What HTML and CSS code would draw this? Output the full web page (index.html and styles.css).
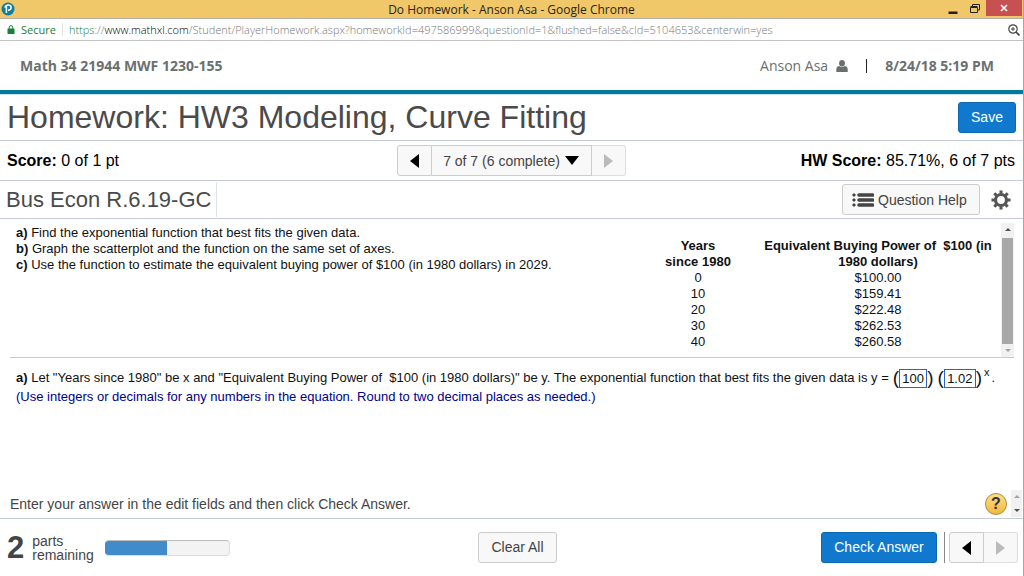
FILE: index.html
```html
<!DOCTYPE html>
<html lang="en">
<head>
  <meta charset="UTF-8">
  <title>Do Homework - Anson Asa - Google Chrome</title>
  <link rel="stylesheet" href="styles.css">
</head>
<body>
  <div class="titlebar">
    <svg class="favicon" width="14" height="14" viewBox="0 0 14 14">
      <circle cx="7" cy="7" r="6.5" fill="#0c7f9e"/>
      <path d="M5.4 11V4.2M4 5.6C4.4 3.6 6 3 7.3 3c1.700 0 2.800 1 2.800 2.500S8.900 8.200 7 8.200" fill="none" stroke="#fff" stroke-width="1.500"/>
    </svg>
    <span class="window-title">Do Homework - Anson Asa - Google Chrome</span>
    <div class="window-buttons">
      <button class="win-btn" aria-label="Minimize">
        <svg width="10" height="12" viewBox="0 0 10 12"><path d="M0.500 9.500h9v2.500h-9z" fill="#222"/></svg>
      </button>
      <button class="win-btn" aria-label="Restore">
        <svg width="10" height="9" viewBox="0 0 10 9"><path d="M2.500 2V.5h7v5.500H8M.5 3.500h7v5h-7zM.5 2.500h7" fill="none" stroke="#222"/></svg>
      </button>
      <button class="win-btn win-close" aria-label="Close">
        <svg width="8" height="8" viewBox="0 0 8 8"><path d="M1 1l6 6M7 1L1 7" stroke="#fff" stroke-width="1.600"/></svg>
      </button>
    </div>
  </div>

  <div class="urlbar">
    <svg width="8" height="9" viewBox="0 0 8 9">
      <rect x="0.500" y="3.500" width="7" height="5.500" rx="0.500" fill="#188038"/>
      <path d="M2.200 4V2.400a1.800 1.800 0 0 1 3.600 0V4" fill="none" stroke="#188038"/>
    </svg>
    <span class="secure">Secure</span>
    <span class="url"><span class="scheme">https</span>://<span class="host">www.mathxl.com</span>/Student/PlayerHomework.aspx?homeworkId=497586999&amp;questionId=1&amp;flushed=false&amp;cId=5104653&amp;centerwin=yes</span>
    <svg class="zoom-icon" width="12" height="12" viewBox="0 0 12 12">
      <circle cx="5" cy="5" r="4.200" fill="none" stroke="#444" stroke-width="1.200"/>
      <path d="M3 5h4M5 3v4" stroke="#444"/>
      <path d="M8 8l3.500 3.500" stroke="#444" stroke-width="1.700"/>
    </svg>
  </div>

  <header class="course">
    <span class="course-name">Math 34 21944 MWF 1230-155</span>
    <div class="user">
      <span>Anson Asa</span>
      <svg width="12" height="12" viewBox="0 0 12 12">
        <ellipse cx="6" cy="3.300" rx="2.900" ry="3.300" fill="#6a7070"/>
        <path d="M.3 12V9.300C.3 7.300 1.600 6.300 3.200 6c.8.7 1.700 1 2.800 1s2-.3 2.800-1c1.600.3 2.900 1.300 2.900 3.300V12z" fill="#6a7070"/>
      </svg>
      <span class="bar"></span>
      <span class="clock">8/24/18 5:19 PM</span>
    </div>
  </header>

  <div class="row title-row">
    <h1>Homework: HW3 Modeling, Curve Fitting</h1>
    <button class="btn-primary save">Save</button>
  </div>

  <div class="row score-row">
    <span><b>Score:</b> 0 of 1 pt</span>
    <div class="pager">
      <button class="pager-prev" aria-label="Previous question"><span class="arrow left"></span></button>
      <button class="pager-list">7 of 7 (6 complete) <span class="arrow down"></span></button>
      <button class="pager-next" aria-label="Next question" disabled><span class="arrow right"></span></button>
    </div>
    <span class="hw-score"><b>HW Score:</b> 85.71%, 6 of 7 pts</span>
  </div>

  <div class="row question-row">
    <h2>Bus Econ R.6.19-GC</h2>
    <div class="tools">
      <button class="btn-plain help-btn">
        <svg width="22" height="14" viewBox="0 0 22 14">
          <path d="M7 2h13.500M7 7h13.500M7 12h13.500" stroke="#444" stroke-width="3.600" stroke-linecap="round"/>
          <path d="M2 0l2 2-2 2L0 2zM2 5l2 2-2 2-2-2zM2 10l2 2-2 2-2-2z" fill="#444"/>
        </svg>
        Question Help
      </button>
      <button class="gear" aria-label="Settings">
        <svg width="20" height="20" viewBox="0 0 20 20">
          <circle cx="10" cy="10" r="5.500" fill="none" stroke="#555" stroke-width="3.200"/>
          <g stroke="#555" stroke-width="3">
            <path d="M10 .5v3M10 16.500v3M.5 10h3M16.500 10h3"/>
            <path d="M3.300 3.300l2.100 2.100M14.600 14.600l2.100 2.100M3.300 16.700l2.100-2.100M14.600 5.400l2.100-2.100"/>
          </g>
        </svg>
      </button>
    </div>
  </div>

  <section class="problem">
    <div class="prompt">
      <p><b>a)</b> Find the exponential function that best fits the given data.</p>
      <p><b>b)</b> Graph the scatterplot and the function on the same set of axes.</p>
      <p><b>c)</b> Use the function to estimate the equivalent buying power of $100 (in 1980 dollars) in 2029.</p>
    </div>
    <table class="data">
      <thead>
        <tr><th>Years<br>since 1980</th><th>Equivalent Buying Power of&nbsp; $100 (in<br>1980 dollars)</th></tr>
      </thead>
      <tbody>
        <tr><td>0</td><td>$100.00</td></tr>
        <tr><td>10</td><td>$159.41</td></tr>
        <tr><td>20</td><td>$222.48</td></tr>
        <tr><td>30</td><td>$262.53</td></tr>
        <tr><td>40</td><td>$260.58</td></tr>
      </tbody>
    </table>
    <div class="scrollbar">
      <span class="tick up"></span>
      <span class="thumb"></span>
      <span class="tick dn light"></span>
    </div>
  </section>

  <main class="work">
    <div class="equation">
      <span><b>a)</b> Let "Years since 1980" be x and "Equivalent Buying Power of&nbsp; $100 (in 1980 dollars)" be y. The exponential function that best fits the given data is y&nbsp;=</span>
      <span class="factor"><span class="paren">(</span><input class="answer" type="text" value="100" aria-label="Coefficient"><span class="paren">)</span></span>
      <span class="factor"><span class="paren">(</span><input class="answer wide" type="text" value="1.02" aria-label="Base"><span class="paren">)</span><sup>x</sup>.</span>
    </div>
    <p class="hint">(Use integers or decimals for any numbers in the equation. Round to two decimal places as needed.)</p>
  </main>

  <div class="status">
    <span>Enter your answer in the edit fields and then click Check Answer.</span>
    <button class="help-circle" aria-label="Help">?</button>
    <div class="mini-scroll">
      <span class="tick up light"></span>
      <span class="tick dn"></span>
    </div>
  </div>

  <footer class="bottom">
    <div class="parts">
      <span class="parts-count">2</span>
      <span class="parts-label">parts<br>remaining</span>
      <div class="progress"><div class="progress-fill" style="width: 50%"></div></div>
    </div>
    <button class="btn-plain clear">Clear All</button>
    <div class="actions">
      <button class="btn-primary check">Check Answer</button>
      <div class="pager pager-small">
        <button aria-label="Previous part"><span class="arrow left"></span></button>
        <button class="pager-next" aria-label="Next part" disabled><span class="arrow right"></span></button>
      </div>
    </div>
  </footer>
</body>
</html>
```
FILE: styles.css
```css
* {
  box-sizing: border-box;
}

body {
  margin: 0;
  min-height: 100vh;
  display: flex;
  flex-direction: column;
  background: #fff;
  border-right: 1px solid #b9a680;
  font-family: "Liberation Sans", Arial, sans-serif;
  font-size: 13px;
  line-height: 16px;
  color: #111;
}

button {
  font-family: inherit;
  padding: 0;
  border: none;
  background: none;
  cursor: pointer;
}

h1, h2, p {
  margin: 0;
  font-weight: normal;
}

svg {
  display: block;
}

/* browser window */
.titlebar {
  display: grid;
  grid-template-columns: 1fr auto 1fr;
  height: 19px;
  background: #f0c869;
  border-bottom: 1px solid #b3b0a8;
}

.favicon {
  margin: 2px 0 0 1px;
}

.window-title {
  font: 12px/19px "Open Sans", sans-serif;
  color: #2a2515;
}

.window-buttons {
  display: flex;
  justify-content: flex-end;
}

.win-btn {
  width: 22px;
  height: 16px;
  display: flex;
  justify-content: center;
  align-items: center;
}

.win-close {
  width: 36px;
  margin-right: 1px;
  background: #c75050;
}

.urlbar {
  display: flex;
  align-items: center;
  height: 22px;
  padding: 0 3px 0 7px;
  border-bottom: 1px solid #c4c4c4;
  font: 11px/20px "Open Sans", sans-serif;
  color: #777;
}

.secure {
  margin-left: 6px;
  padding-right: 6px;
  border-right: 1px solid #e4e4e4;
  line-height: 13px;
  color: #188038;
}

.url {
  margin-left: 6px;
  font-weight: 300;
}

.scheme {
  color: #188038;
}

.host {
  color: #000;
}

.zoom-icon {
  margin-left: auto;
}

/* course header */
.course {
  display: flex;
  justify-content: space-between;
  align-items: center;
  height: 53px;
  padding: 0 29px 0 20px;
  border-bottom: 4px solid #007a9c;
  font-family: "Open Sans", sans-serif;
  font-size: 14px;
  color: #6a7070;
}

.course-name,
.clock {
  font-weight: bold;
}

.user {
  display: flex;
  align-items: center;
}

.user svg {
  margin-left: 8px;
}

.bar {
  width: 1px;
  height: 14px;
  margin: 0 18px;
  background: #222;
}

/* heading rows */
.row {
  display: flex;
  justify-content: space-between;
  align-items: center;
  border-bottom: 1px solid #c5cbda;
}

.title-row {
  height: 47px;
  padding: 0 7px;
  border-top: 1px solid #cfe6ee;
}

h1 {
  padding-bottom: 2px;
  font-size: 32px;
  line-height: 40px;
  color: #4a4a4a;
}

.btn-primary {
  height: 31px;
  padding-bottom: 2px;
  background: #1079cd;
  border: 1px solid #0d68b2;
  border-radius: 3px;
  font-size: 14px;
  color: #fff;
}

.save {
  width: 58px;
}

.score-row {
  display: grid;
  grid-template-columns: 1fr auto 1fr;
  height: 40px;
  padding: 0 8px 0 7px;
  font-size: 16px;
  color: #000;
}

.hw-score {
  text-align: right;
}

.pager {
  display: flex;
  height: 31px;
}

.pager button {
  display: flex;
  justify-content: center;
  align-items: center;
  width: 35px;
  background: #f8f8f8;
  border: 1px solid #ccc;
  font-size: 14px;
  color: #444;
}

.pager button + button {
  border-left: none;
}

.pager button:first-child {
  border-radius: 3px 0 0 3px;
}

.pager button:last-child {
  border-radius: 0 3px 3px 0;
}

.pager .pager-list {
  width: 160px;
  gap: 5px;
}

.pager .pager-next {
  width: 34px;
  border-color: #ddd;
}

.arrow {
  border: 7px solid transparent;
}

.arrow.left {
  border-left-width: 0;
  border-right: 9px solid #000;
}

.arrow.right {
  border-right-width: 0;
  border-left: 9px solid #bbb;
}

.arrow.down {
  border-width: 9px 7px 0;
  border-top-color: #000;
}

.question-row {
  height: 38px;
  padding: 0 12px 0 6px;
}

h2 {
  padding-right: 5px;
  border-right: 1px solid #dfe3ea;
  font-size: 22px;
  line-height: 35px;
  color: #4a4a4a;
}

.tools {
  display: flex;
  align-items: center;
  gap: 11px;
}

.btn-plain {
  height: 31px;
  padding-bottom: 2px;
  background: #f8f8f8;
  border: 1px solid #ccc;
  border-radius: 3px;
  font-size: 14px;
  color: #444;
}

.help-btn {
  display: flex;
  align-items: center;
  gap: 4px;
  width: 138px;
  padding: 0 0 0 9px;
}

/* problem statement */
.problem {
  display: flex;
  height: 139px;
  margin: 0 9px 0 10px;
  padding-top: 4px;
  border-bottom: 1px solid #c5cbda;
}

.prompt {
  flex: 1;
  padding: 2px 0 0 6px;
}

.data {
  align-self: flex-start;
  margin: 15px 4px 0 0;
  border-collapse: collapse;
  text-align: center;
}

.data th,
.data td {
  padding: 0;
}

.data th:first-child {
  width: 122px;
}

.data th:last-child {
  width: 238px;
}

.scrollbar {
  display: flex;
  flex-direction: column;
  align-items: center;
  justify-content: space-between;
  width: 13px;
  padding: 5px 0;
  background: #f1f1f1;
}

.thumb {
  flex: 1;
  width: 11px;
  margin: 7px 0 5px;
  background: #a8a8a8;
}

.tick {
  border: 3px solid transparent;
}

.tick.up {
  border-top-width: 0;
  border-bottom-color: #505050;
}

.tick.dn {
  border-bottom-width: 0;
  border-top-color: #505050;
}

.tick.up.light {
  border-bottom-color: #a3a3a3;
}

.tick.dn.light {
  border-top-color: #a3a3a3;
}

/* answer area */
.work {
  flex: 1;
  padding: 9px 16px 0;
}

.equation {
  display: flex;
  align-items: center;
  height: 22px;
  white-space: nowrap;
}

.factor {
  display: flex;
  align-items: center;
  margin-left: 4px;
}

.paren {
  font-size: 19px;
  line-height: 20px;
}

.answer {
  width: 28px;
  height: 19px;
  padding: 0;
  border: 1px solid #2b62cf;
  font: inherit;
  color: inherit;
  text-align: center;
}

.wide {
  width: 32px;
}

sup {
  margin: 0 2px;
  font-size: 11px;
  line-height: 8px;
  align-self: flex-start;
}

.hint {
  color: #00008b;
}

.status {
  display: flex;
  align-items: center;
  height: 30px;
  padding-left: 10px;
  border-bottom: 1px solid #c5cbda;
  font-size: 14px;
  color: #444;
}

.help-circle {
  width: 22px;
  height: 22px;
  margin-left: auto;
  background: linear-gradient(#fbe08a, #f2b93c);
  border: 1px solid #b08a3a;
  border-radius: 50%;
  font-size: 16px;
  font-weight: bold;
  color: #333;
}

.mini-scroll {
  display: flex;
  flex-direction: column;
  align-items: center;
  justify-content: space-between;
  width: 11px;
  height: 27px;
  margin: 0 1px 0 4px;
  padding: 5px 0;
  background: #f1f1f1;
}

/* footer */
.bottom {
  display: grid;
  grid-template-columns: 1fr auto 1fr;
  align-items: center;
  height: 57px;
  padding: 0 5px 0 7px;
}

.parts {
  display: flex;
  align-items: center;
  font-size: 14px;
  line-height: 14px;
  color: #444;
}

.parts-count {
  font-size: 31px;
  line-height: 30px;
  font-weight: bold;
}

.parts-label {
  margin-left: 8px;
}

.progress {
  width: 125px;
  height: 16px;
  margin-left: 11px;
  overflow: hidden;
  background: #f3f3f3;
  border: 1px solid #ddd;
  border-top-color: #bbb;
  border-left: none;
  border-radius: 4px;
}

.progress-fill {
  height: 100%;
  background: #428bca;
}

.clear {
  width: 79px;
  margin-left: 10px;
}

.actions {
  display: flex;
  justify-content: flex-end;
}

.check {
  width: 116px;
}

.pager-small {
  margin-left: 7px;
  padding-left: 4px;
  border-left: 1px solid #888;
}
```
